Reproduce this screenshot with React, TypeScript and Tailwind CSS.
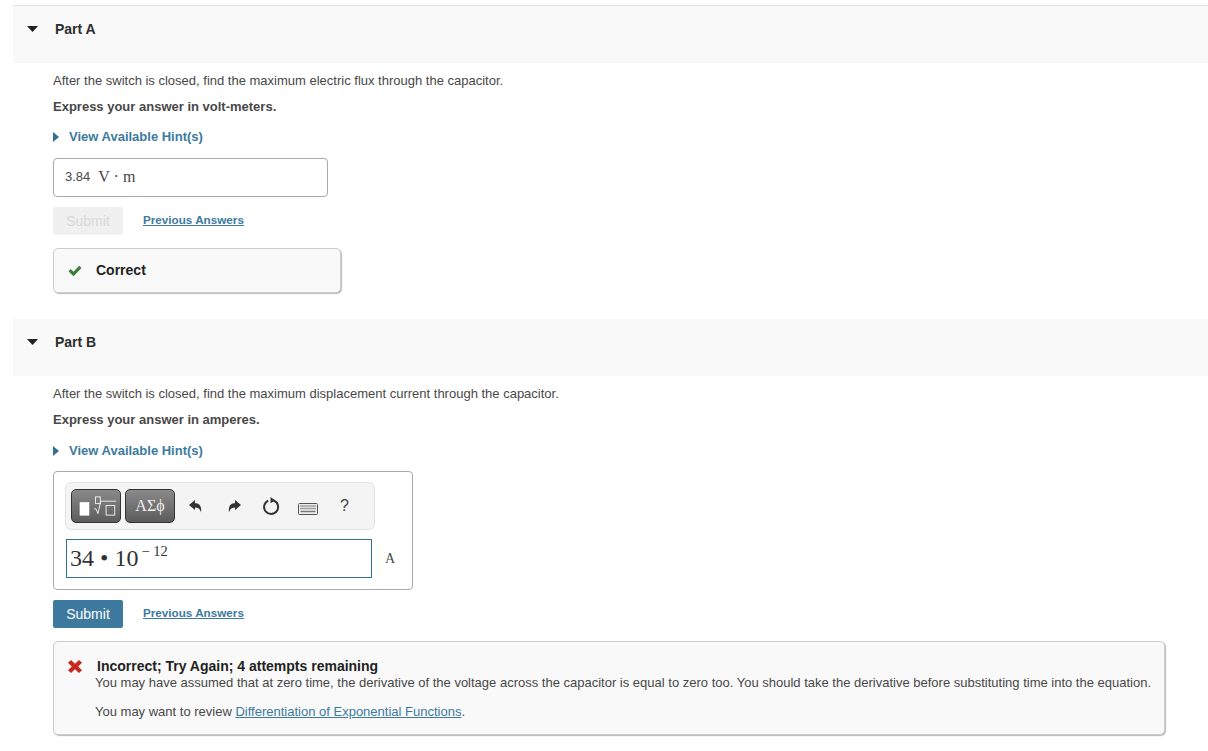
const sans = "font-['Liberation_Sans',Arial,sans-serif]"
const serif = "font-['Liberation_Serif','Times_New_Roman',serif]"

function PartHeader({ label }: { label: string }) {
  return (
    <div className="ml-[13px] h-[57px] bg-[#f9f9f9] flex items-start pt-[14px]">
      <svg width="11" height="6" viewBox="0 0 11 6" className="ml-[14px] mt-[6px] mr-[17px]">
        <path d="M0 0h11L5.500 6z" fill="#222" />
      </svg>
      <span className="text-[14px] leading-[18px] font-bold text-[#2e2e2e]">{label}</span>
    </div>
  )
}

function Hint() {
  return (
    <div className="flex items-center h-[18px] text-[13px] font-bold text-[#3d7a9e]">
      <svg width="6" height="10" viewBox="0 0 6 10" className="mr-[10px]">
        <path d="M0 0l6 5-6 5z" fill="#33708f" />
      </svg>
      View Available Hint(s)
    </div>
  )
}

function PrevAnswers() {
  return <a className="ml-[20px] mt-[5px] text-[11.7px] leading-[15px] font-bold text-[#3d7a9e] underline">Previous Answers</a>
}

function CheckMark() {
  return (
    <svg width="14" height="12" viewBox="0 0 14 12">
      <path d="M0.500 6.300l2.200-2.200 2.800 2.700L11.200 0.800 13.500 3 5.500 11.300z" fill="#3b7d3b" />
    </svg>
  )
}

function CrossMark() {
  return (
    <svg width="14" height="13" viewBox="0 0 14 13">
      <path d="M3 0L7 3.700 11 0l3 2.800L10.200 6.500 14 10.200 11 13 7 9.300 3 13 0 10.200 3.800 6.500 0 2.800z" fill="#c8281e" />
    </svg>
  )
}

function SqrtTemplateIcon() {
  return (
    <svg width="50" height="32" viewBox="0 0 50 32">
      <rect x="8" y="12" width="10" height="14" fill="#fff" />
      <rect x="24.500" y="6.500" width="5" height="7" fill="none" stroke="#eee" strokeWidth="1" />
      <path d="M23 19h2l2 5 3-13h16" fill="none" stroke="#eee" strokeWidth="1" />
      <rect x="35.500" y="15.500" width="9" height="10" fill="none" stroke="#eee" strokeWidth="1" />
    </svg>
  )
}

function Toolbar() {
  return (
    <div className="w-[310px] h-[48px] rounded-[6px] border border-[#e3e3e3] bg-[#f4f4f4] flex items-center pl-[5px]">
      <div className="w-[50px] h-[34px] rounded-[5px] border border-[#333] bg-gradient-to-b from-[#8a8a8a] to-[#5c5c5c] flex items-center justify-center">
        <SqrtTemplateIcon />
      </div>
      <div className={`ml-[4px] w-[50px] h-[34px] rounded-[5px] border border-[#333] bg-gradient-to-b from-[#8a8a8a] to-[#5c5c5c] flex items-center justify-center text-[16px] text-[#eee] ${serif}`}>
        ΑΣϕ
      </div>
      <div className="ml-[13px] flex items-center">
        <svg width="15" height="16" viewBox="0 0 15 16" className="mt-[1px]">
          <path d="M1 6L7 1v3.200c4 0 7 2.500 6 9.300-1-3.800-3-5-6-5V11z" fill="#333" />
        </svg>
        <svg width="15" height="16" viewBox="0 0 15 16" className="ml-[24px] mt-[1px]">
          <path d="M14 6L8 1v3.200c-4 0-7 2.500-6 9.300 1-3.800 3-5 6-5V11z" fill="#333" />
        </svg>
        <svg width="17" height="20" viewBox="0 0 17 20" className="ml-[21px]">
          <path d="M10.800 4.500A7 7 0 1 1 5.200 4.600" fill="none" stroke="#333" strokeWidth="2" />
          <path d="M7.500 1l4.800 3.500-4.800 2.800z" fill="#333" />
        </svg>
        <svg width="20" height="12" viewBox="0 0 20 12" className="ml-[18px] mt-[6px]">
          <rect x="0.500" y="0.500" width="19" height="11" rx="1" fill="#eee" stroke="#555" />
          <path d="M2.500 3h15M2.500 5.500h15" stroke="#555" strokeWidth="1.400" strokeDasharray="1 1" />
          <path d="M2.500 8.500h15" stroke="#777" strokeWidth="1.400" />
        </svg>
        <span className="ml-[22px] w-[10px] text-[16px] leading-[20px] text-[#444]">?</span>
      </div>
    </div>
  )
}

export default function App() {
  return (
    <div className={`w-[1208px] h-[751px] overflow-hidden bg-white text-[#484848] pt-[5px] ${sans}`}>
      <div className="ml-[13px] h-px bg-[#e0e0e0]" />

      {/* Part A */}
      <PartHeader label="Part A" />
      <div className="pl-[53px]">
        <p className="mt-[10px] text-[13px] leading-[16px]">After the switch is closed, find the maximum electric flux through the capacitor.</p>
        <p className="mt-[10px] text-[13px] leading-[16px] font-bold">Express your answer in volt-meters.</p>
        <div className="mt-[13px]"><Hint /></div>
        <div className="mt-[12px] w-[275px] h-[39px] rounded-[4px] border border-[#aaa] flex items-center pl-[11px]">
          <span className="text-[13px] -mt-[1px]">3.84</span>
          <span className={`ml-[8px] text-[16px] -mt-[2px] ${serif}`}>V · m</span>
        </div>
        <div className="mt-[10px] flex items-start">
          <div className="w-[70px] h-[28px] rounded-[2px] bg-[#f0f0f0] text-[#d8d8d8] text-[14px] flex items-center justify-center">Submit</div>
          <PrevAnswers />
        </div>
        <div className="mt-[13px] w-[288px] h-[45px] rounded-[5px] border border-[#ccc] bg-[#f9f9f9] shadow-[1px_1px_1px_#bbb] flex items-center pl-[14px]">
          <CheckMark />
          <span className="ml-[14px] text-[14px] font-bold text-[#222]">Correct</span>
        </div>
      </div>

      {/* Part B */}
      <div className="mt-[26px]"><PartHeader label="Part B" /></div>
      <div className="pl-[53px]">
        <p className="mt-[10px] text-[13px] leading-[16px]">After the switch is closed, find the maximum displacement current through the capacitor.</p>
        <p className="mt-[10px] text-[13px] leading-[16px] font-bold">Express your answer in amperes.</p>
        <div className="mt-[14px]"><Hint /></div>
        <div className="mt-[11px] w-[360px] h-[119px] rounded-[4px] border border-[#aaa] pl-[11px] pt-[10px]">
          <Toolbar />
          <div className="mt-[9px] flex items-center">
            <div className={`ml-[1px] w-[306px] h-[39px] border border-[#33708f] pl-[3px] text-[24px] leading-[37px] text-[#333] ${serif}`}>
              34 • 10<sup className="text-[14.500px] leading-none top-0 align-[10px] ml-[3px]">− 12</sup>
            </div>
            <span className={`ml-[13px] text-[14px] ${serif}`}>A</span>
          </div>
        </div>
        <div className="mt-[10px] flex items-start">
          <div className="w-[70px] h-[28px] rounded-[2px] bg-[#3d7a9e] text-white text-[14px] flex items-center justify-center">Submit</div>
          <PrevAnswers />
        </div>
        <div className="mt-[13px] w-[1112px] h-[94px] rounded-[5px] border border-[#ccc] bg-[#f9f9f9] shadow-[1px_1px_1px_#bbb] pl-[14px] pt-[16px]">
          <div className="flex items-center h-[16px]">
            <CrossMark />
            <span className="ml-[15px] text-[14px] font-bold text-[#222]">Incorrect; Try Again; 4 attempts remaining</span>
          </div>
          <p className="ml-[27px] mt-[1px] text-[13px] leading-[16px]">You may have assumed that at zero time, the derivative of the voltage across the capacitor is equal to zero too. You should take the derivative before substituting time into the equation.</p>
          <p className="ml-[27px] mt-[13px] text-[13px] leading-[16px]">
            You may want to review <a className="text-[#3d7a9e] underline">Differentiation of Exponential Functions</a>.
          </p>
        </div>
      </div>
    </div>
  )
}
